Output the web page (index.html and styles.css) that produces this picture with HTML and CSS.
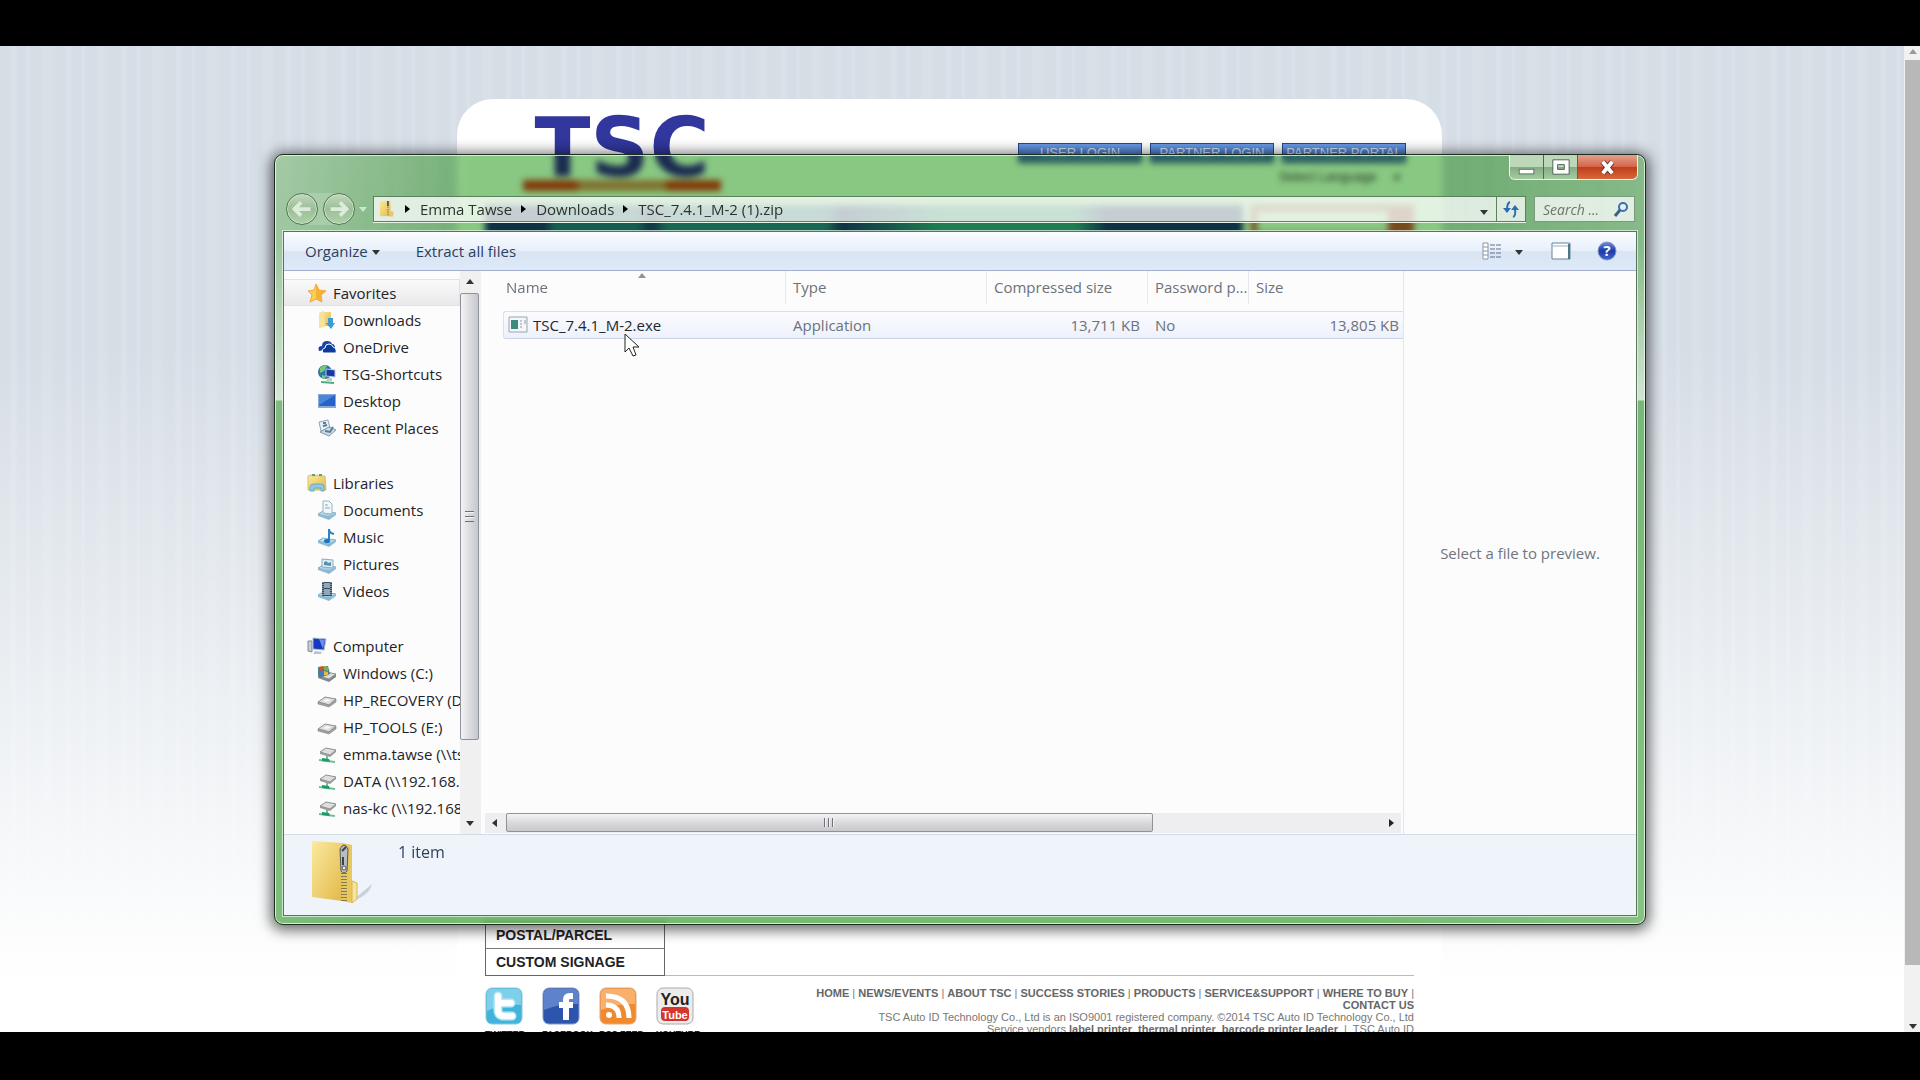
FILE: index.html
```html
<!DOCTYPE html>
<html lang="en">
<head>
    <meta charset="UTF-8">
    <meta name="viewport" content="width=device-width, initial-scale=1.0">
    <title>TSC_7.4.1_M-2 (1).zip</title>
    <link rel="stylesheet" href="styles.css">
</head>
<body>

    <!-- Shared icons -->
    <svg class="defs" aria-hidden="true">
        <defs>
            <linearGradient id="gold" x1="0" y1="0" x2="1" y2="1">
                <stop offset="0" stop-color="#fbeaa0"/><stop offset="1" stop-color="#e3b94a"/>
            </linearGradient>
            <linearGradient id="tray" x1="0" y1="0" x2="0" y2="1">
                <stop offset="0" stop-color="#d9f0fa"/><stop offset="1" stop-color="#7fb2cf"/>
            </linearGradient>
            <linearGradient id="orb" x1="0" y1="0" x2="0" y2="1">
                <stop offset="0" stop-color="#6f8fe0"/><stop offset=".5" stop-color="#1b3aa8"/><stop offset="1" stop-color="#3f68d0"/>
            </linearGradient>
        </defs>
        <symbol id="disk" viewBox="0 0 20 20">
            <path d="M1 12 8 7l11 2-7 6z" fill="#dcdcdc" stroke="#8f8f8f"/>
            <path d="M1 12v2l11 3 7-5V9l-7 6z" fill="#a3a3a3" stroke="#858585" stroke-width=".6"/>
            <path d="M6 11l4-2 4 1-4 2z" fill="#f8f8f8"/>
        </symbol>
        <symbol id="netdisk" viewBox="0 0 20 20">
            <path d="M3 8l6-4 10 2-6 5z" fill="#dedede" stroke="#8f8f8f"/>
            <path d="M3 8v2l10 3 6-5V6l-6 5z" fill="#9a9a9a"/>
            <path d="M10 12v4M2 16l16 2" stroke="#6fbf9b" stroke-width="2"/>
            <path d="M5 14l7 1 1 3-8-1z" fill="#1f9a68"/>
        </symbol>
        <symbol id="base" viewBox="0 0 20 20">
            <path d="M1 14 6 11l13 2-7 5z" fill="url(#tray)" stroke="#6a9cba" stroke-width=".8"/>
            <path d="M1 14v2l11 4 7-5v-2l-7 5z" fill="#8fbdd6"/>
        </symbol>
        <symbol id="zip" viewBox="0 0 20 20">
            <path d="M2 1h12v17H2z" fill="url(#gold)"/>
            <path d="M14 12l3 1v5l-3 1z" fill="#e8c662"/>
            <path d="M11 1v6" stroke="#555" stroke-width="2"/>
            <path d="M11 8v10" stroke="#9b9170" stroke-width="2" stroke-dasharray="1 1"/>
        </symbol>
    </svg>

    <div class="stage">

        <!-- Web site in the back -->
        <div class="site">
            <div class="paper">
                <header class="site-header">
                    <div class="logo"><span>TSC</span><i class="logo-bar"></i></div>
                    <div class="logins">
                        <div class="login-row">
                            <a href="#">USER LOGIN</a>
                            <a href="#">PARTNER LOGIN</a>
                            <a href="#">PARTNER PORTAL</a>
                        </div>
                        <p class="language">Select Language <span>▼</span></p>
                    </div>
                </header>
                <div class="site-nav"><div class="site-menu"></div><div class="site-search"></div></div>
                <div class="site-main"></div>
                <div class="site-bottom">
                    <ul class="markets">
                        <li><a href="#">POSTAL/PARCEL</a></li>
                        <li><a href="#">CUSTOM SIGNAGE</a></li>
                    </ul>
                    <hr>
                </div>
                <footer class="site-footer">
                    <div class="social">
                        <a href="#">
                            <svg viewBox="0 0 38 38"><rect x="1" y="1" width="36" height="36" rx="6" fill="#42b4dc" stroke="#8cc8dc"/><path d="M2 7q0-5 5-5h24q5 0 5 5v11Q18 16 2 24z" fill="#7ed0ea"/><path d="M13 9v14q0 6 6 6h8M13 16h13" fill="none" stroke="#b5e8f8" stroke-width="9" stroke-linecap="round"/><path d="M13 9v14q0 6 6 6h8M13 16h13" fill="none" stroke="#fff" stroke-width="6" stroke-linecap="round"/></svg>
                            <span>TWITTER</span>
                        </a>
                        <a href="#">
                            <svg viewBox="0 0 38 38"><rect x="1" y="1" width="36" height="36" rx="6" fill="#2d55ad" stroke="#8499c8"/><path d="M2 7q0-5 5-5h24q5 0 5 5v10Q18 16 2 23z" fill="#5f83cb"/><path d="M31 9h-3q-4 0-4 4v20M17 18h14" fill="none" stroke="#fff" stroke-width="6"/></svg>
                            <span>FACEBOOK</span>
                        </a>
                        <a href="#">
                            <svg viewBox="0 0 38 38"><rect x="1" y="1" width="36" height="36" rx="6" fill="#f08a2c" stroke="#e0a878"/><path d="M2 7q0-5 5-5h24q5 0 5 5v10Q18 16 2 23z" fill="#f8b06c"/><circle cx="10" cy="28" r="3" fill="#fff"/><path d="M7 18q13 0 13 13M7 9q23 0 23 22" fill="none" stroke="#fff" stroke-width="5"/></svg>
                            <span>RSS FEED</span>
                        </a>
                        <a href="#">
                            <svg viewBox="0 0 38 38"><rect x="1" y="1" width="36" height="36" rx="6" fill="#ececec" stroke="#aaa"/><text class="yt-you" x="19" y="18" text-anchor="middle">You</text><rect x="5" y="20" width="28" height="14" rx="4" fill="#d2362f"/><text class="yt-tube" x="19" y="32" text-anchor="middle">Tube</text></svg>
                            <span>YOUTUBE</span>
                        </a>
                    </div>
                    <div class="legal">
                        <p><a href="#">HOME</a> | <a href="#">NEWS/EVENTS</a> | <a href="#">ABOUT TSC</a> | <a href="#">SUCCESS STORIES</a> | <a href="#">PRODUCTS</a> | <a href="#">SERVICE&amp;SUPPORT</a> | <a href="#">WHERE TO BUY</a> |<br><a href="#">CONTACT US</a></p>
                        <p>TSC Auto ID Technology Co., Ltd is an ISO9001 registered company. ©2014 TSC Auto ID Technology Co., Ltd</p>
                        <p>Service vendors <b>label printer</b>, <b>thermal printer</b>, <b>barcode printer leader</b> &nbsp;|&nbsp; TSC Auto ID</p>
                    </div>
                </footer>
            </div>
        </div>
        <div class="page-scroll"><span class="arrow up"></span><div class="page-thumb"></div><span class="arrow down"></span></div>

        <!-- Aero glass -->
        <div class="glass-blur"></div>
        <div class="glass-tint"></div>

        <!-- Explorer window -->
        <div class="window">
            <div class="caption">
                <button class="cap" aria-label="Minimize"><svg viewBox="0 0 36 25"><rect x="10" y="15" width="16" height="5" fill="#fff" stroke="#5b6f60"/></svg></button>
                <button class="cap" aria-label="Maximize"><svg viewBox="0 0 34 25"><path d="M9 5h17v15H9zM14 10v5h7v-5z" fill="#fff" fill-rule="evenodd" stroke="#4e6152"/></svg></button>
                <button class="cap close" aria-label="Close"><svg viewBox="0 0 60 25"><path d="M25 7l10 12M35 7 25 19" stroke="#6b3026" stroke-width="6"/><path d="M25 7l10 12M35 7 25 19" stroke="#fff" stroke-width="4"/></svg></button>
            </div>

            <div class="address-row">
                <div class="history">
                    <button aria-label="Back"><svg viewBox="0 0 32 32"><path d="M25 16H9M15 9l-7 7 7 7" fill="none" stroke="#dcecd8" stroke-width="4"/></svg></button>
                    <button aria-label="Forward"><svg viewBox="0 0 32 32"><path d="M7 16h16M17 9l7 7-7 7" fill="none" stroke="#dcecd8" stroke-width="4"/></svg></button>
                </div>
                <span class="history-drop"></span>
                <nav class="address">
                    <svg class="icon" viewBox="0 0 20 20"><use href="#zip"/></svg>
                    <i class="tri"></i><a href="#">Emma Tawse</a>
                    <i class="tri"></i><a href="#">Downloads</a>
                    <i class="tri"></i><a href="#">TSC_7.4.1_M-2 (1).zip</a>
                    <button class="address-drop" aria-label="Previous locations"><i class="caret"></i></button>
                    <button class="refresh" aria-label="Refresh"><svg viewBox="0 0 18 18"><path d="M8 2Q5 3 5 10" fill="none" stroke="#2d6cb5" stroke-width="2"/><path d="M1 8h8l-4 5z" fill="#2d6cb5"/><path d="M11 17q3-1 2-8" fill="none" stroke="#2d6cb5" stroke-width="2"/><path d="M9 10h8l-4-5z" fill="#2d6cb5"/></svg></button>
                </nav>
                <label class="search">
                    <input type="text" placeholder="Search ..." aria-label="Search">
                    <svg viewBox="0 0 16 16"><circle cx="10" cy="6" r="4" fill="#e6f0fa" stroke="#3b6fae" stroke-width="2"/><path d="M7 9l-5 6" stroke="#3f5f86" stroke-width="3"/></svg>
                </label>
            </div>

            <div class="client">
                <div class="toolbar">
                    <button>Organize <i class="caret"></i></button>
                    <button>Extract all files</button>
                    <div class="tools">
                        <button aria-label="Change view"><svg width="20" height="18" viewBox="0 0 20 18"><path d="M1 1h5v16H1zM1 5h5M1 9h5M1 13h5" fill="#fff" stroke="#8a98a6"/><path d="M8 3h11M8 7h11M8 11h11M8 15h11" stroke="#5d7186" stroke-dasharray="5 1"/></svg></button>
                        <button class="view-drop" aria-label="More options"><i class="caret"></i></button>
                        <button aria-label="Preview pane"><svg width="20" height="18" viewBox="0 0 20 18"><path d="M1 1h18v16H1z" fill="#fff" stroke="#6b8299"/><path d="M1 4h18" stroke="#9cb0c2"/><path d="M18 2v15" stroke="#4d7880" stroke-width="2"/></svg></button>
                        <button aria-label="Help"><svg width="20" height="20" viewBox="0 0 20 20"><circle cx="10" cy="10" r="9" fill="url(#orb)" stroke="#8496c4"/><text class="help-mark" x="10" y="15" text-anchor="middle">?</text></svg></button>
                    </div>
                </div>

                <div class="panes">
                    <nav class="tree">
                        <ul>
                            <li class="root current"><a href="#"><svg viewBox="0 0 20 20"><path d="M9 1l3 6 7 1-5 4 1 7-6-3-6 3 2-7-4-4 6-1z" fill="#f9cf4c" stroke="#eba942"/><path d="M9 1l3 6 7 1-5 4 1 7-6-3z" fill="#f4b037"/></svg>Favorites</a></li>
                            <li><a href="#"><svg viewBox="0 0 20 20"><path d="M2 3l5-2v15l-5 2zM7 2h7v14H7z" fill="url(#gold)"/><path d="M2 3l5-2 1 16-6 1z" fill="#f7e49c"/><path d="M11 8h5v5h2l-4 6-5-6h2z" fill="#3a9bd8"/></svg>Downloads</a></li>
                            <li><a href="#"><svg viewBox="0 0 20 20"><path d="M2 14q-2-5 3-5 0-5 5-5 4 0 5 3 3 0 3 4z" fill="#1947a8"/><path d="M6 16q-2-4 2-5 0-4 4-4 3 0 4 3 4 1 3 6z" fill="#0b3c9b" stroke="#fff"/></svg>OneDrive</a></li>
                            <li><a href="#"><svg viewBox="0 0 20 20"><circle cx="8" cy="8" r="7" fill="#2c77a9"/><path d="M3 4q4-4 7-2L7 7 3 9zM5 11l4 1-1 3-3-1z" fill="#79c67c"/><path d="M9 5l9 1v7l-9-1z" fill="#1637a8" stroke="#b9c8e0"/><path d="M11 14h4v3H9z" fill="#c1cbd0"/><path d="M4 18l13 1" stroke="#48b37d" stroke-width="2"/></svg>TSG-Shortcuts</a></li>
                            <li><a href="#"><svg viewBox="0 0 20 20"><path d="M1 3h18v14H1z" fill="#86a9d8"/><path d="M2 4h16v11H2z" fill="#2763c7"/><path d="M2 4h16L2 14z" fill="#4c86dc"/></svg>Desktop</a></li>
                            <li><a href="#"><svg viewBox="0 0 20 20"><path d="M2 4l9-2 2 8-9 3z" fill="#e7eef3" stroke="#90a6b4"/><path d="M3 14l9-5 7 3-7 6z" fill="#d1dde4" stroke="#8198a6"/><path d="M6 5h3M6 8l4-1M8 13l5 1 3-5" stroke="#4d81a0" stroke-width="2" fill="none"/></svg>Recent Places</a></li>
                        </ul>
                        <ul>
                            <li class="root"><a href="#"><svg viewBox="0 0 20 20"><path d="M1 3l3-1 3 1 3-1 3 1h5l1 14H1z" fill="url(#gold)" stroke="#d9bd68"/><path d="M5 2h3M12 2h3" stroke="#5ea276" stroke-width="2"/><path d="M3 18v-4q0-3 4-3h7q3 0 3 3v4h-3v-3H7v3z" fill="#8ccbe6" stroke="#6aa9c6"/></svg>Libraries</a></li>
                            <li><a href="#"><svg viewBox="0 0 20 20"><use href="#base"/><path d="M6 1h6l3 3v10l-9-1z" fill="#f2f7fa" stroke="#9ab3c4"/><path d="M8 5h3M8 8h5" stroke="#7faac6"/></svg>Documents</a></li>
                            <li><a href="#"><svg viewBox="0 0 20 20"><use href="#base"/><path d="M12 14V2q0 4 5 5" fill="none" stroke="#2a83c9" stroke-width="2"/><ellipse cx="10" cy="14" rx="3" ry="2" fill="#1a73bf"/></svg>Music</a></li>
                            <li><a href="#"><svg viewBox="0 0 20 20"><use href="#base"/><path d="M5 5l11 1v8L5 13z" fill="#ddeef5" stroke="#8fabb9"/><path d="M7 8q3-2 4 1l3-1v4l-7-1z" fill="#5590b0"/></svg>Pictures</a></li>
                            <li><a href="#"><svg viewBox="0 0 20 20"><use href="#base"/><path d="M5 1h10v14H5z" fill="#3d4b58"/><path d="M7 2h6v5H7zM7 8h6v6H7z" fill="#8ba9bf"/><path d="M6 1v14M14 1v14" stroke="#c8d0d6" stroke-dasharray="1 1"/></svg>Videos</a></li>
                        </ul>
                        <ul>
                            <li class="root"><a href="#"><svg viewBox="0 0 20 20"><path d="M1 5h4v11l-4-1z" fill="#c4cdd6" stroke="#7e8b98"/><path d="M6 2l13 1-2 11-11-1z" fill="#1638c0" stroke="#a8b9d8"/><path d="M12 3l6 1-2 9z" fill="#6c8ce8"/><path d="M8 15l7 1-1 2H6z" fill="#b7c3ce"/></svg>Computer</a></li>
                            <li><a href="#"><svg viewBox="0 0 20 20"><path d="M1 13 9 9l10 2-7 5z" fill="#dcdcdc" stroke="#8f8f8f"/><path d="M1 13v2l11 4 7-5v-3l-7 5z" fill="#7f8a8c"/><path d="M1 4l10-1 2 8-10 4-2-3z" fill="#4d7d86"/><path d="M2 4l4-1v4l-4 1z" fill="#d8502e"/><path d="M7 3l4 1v4L7 7z" fill="#76b843"/><path d="M2 9l4-1v4l-4 1z" fill="#3c7cc4"/><path d="M7 8l4 1v4l-4-1z" fill="#e8b93a"/></svg>Windows (C:)</a></li>
                            <li><a href="#"><svg><use href="#disk"/></svg>HP_RECOVERY (D:)</a></li>
                            <li><a href="#"><svg><use href="#disk"/></svg>HP_TOOLS (E:)</a></li>
                            <li><a href="#"><svg><use href="#netdisk"/></svg>emma.tawse (\\tsg</a></li>
                            <li><a href="#"><svg><use href="#netdisk"/></svg>DATA (\\192.168.1</a></li>
                            <li><a href="#"><svg><use href="#netdisk"/></svg>nas-kc (\\192.168.1</a></li>
                        </ul>
                    </nav>
                    <div class="v-scroll"><span class="arrow up"></span><div class="v-thumb"><i></i></div><span class="arrow down"></span></div>

                    <div class="list">
                        <table>
                            <thead>
                                <tr><th class="col-name">Name<i class="sort"></i></th><th class="col-type">Type</th><th class="col-comp">Compressed size</th><th class="col-pass">Password p...</th><th class="col-size">Size</th></tr>
                            </thead>
                            <tbody>
                                <tr>
                                    <td class="file"><svg viewBox="0 0 20 18"><path d="M1 1h18v15H1z" fill="#f4f6f7" stroke="#9aa5ad"/><path d="M3 4h7v9H3z" fill="#3b8c7c"/><path d="M12 5h2M12 8h2M12 11h2M17 4v4" stroke="#8b9aa4"/></svg>TSC_7.4.1_M-2.exe</td>
                                    <td>Application</td><td class="num">13,711 KB</td><td>No</td><td class="num">13,805 KB</td>
                                </tr>
                            </tbody>
                        </table>
                        <div class="h-scroll"><span class="arrow left"></span><div class="h-track"><div class="h-thumb"><i></i></div></div><span class="arrow right"></span></div>
                    </div>

                    <aside class="preview">Select a file to preview.</aside>
                </div>

                <div class="details">
                    <svg viewBox="0 0 64 66">
                        <path d="M42 62l20-17q-3 12-20 17z" fill="#b9c2cf" opacity=".7"/>
                        <path d="M2 2l30 2v58L2 58z" fill="url(#gold)"/>
                        <path d="M32 4l10 2v58l-10-2z" fill="#e8c75d"/>
                        <path d="M42 42l5 2v16l-5 4z" fill="#f4e5a4" stroke="#d9b552"/>
                        <path d="M34 34v29" stroke="#817a5d" stroke-width="6" stroke-dasharray="1 2"/>
                        <path d="M30 10q4-8 8 0l-1 22q-3 4-6 0z" fill="#b9bdc2" stroke="#54585d"/>
                        <path d="M32 12l4-4M33 18v8" stroke="#3f4347" stroke-width="2"/>
                        <circle cx="34" cy="29" r="2" fill="#eee" stroke="#555"/>
                    </svg>
                    <span>1 item</span>
                </div>
            </div>
        </div>

        <svg class="cursor" viewBox="0 0 16 24"><path d="M1 1v18l4-4 4 8 3-1-3-8h6z" fill="#fff" stroke="#222"/></svg>
    </div>

</body>
</html>
```
FILE: styles.css
```css
* {
    box-sizing: border-box;
}

body {
    margin: 0;
    padding: 46px 0 48px;
    height: 100vh;
    background: #000;
    font-family: "Open Sans", "Noto Sans", sans-serif;
    font-size: 15px;
    color: #1e2328;
}

a {
    color: inherit;
    text-decoration: none;
}

ul {
    list-style: none;
    margin: 0;
    padding: 0;
}

p {
    margin: 0;
}

button {
    border: 0;
    padding: 0;
    background: none;
    font: inherit;
    color: inherit;
}

.defs {
    position: absolute;
    width: 0;
    height: 0;
}

.stage {
    position: relative;
    display: flex;
    height: 100%;
    overflow: hidden;
}

/* Site */
.site {
    flex: 1;
    display: flex;
    justify-content: center;
    padding: 53px 5px 0 0;
    font-family: "Liberation Sans", Arial, sans-serif;
    background:
        linear-gradient(rgba(255, 255, 255, 0) 30%, #fff 95%),
        repeating-linear-gradient(90deg, #d5dde5 0 9px, #dae1e8 12px 15px, #d6dde6 18px 26px, #dce2ea 28px, #d5dde5 31px 40px, #d9e0e8 44px 50px, #d5dde5 55px);
}

.paper {
    display: flex;
    flex-direction: column;
    width: 985px;
    padding: 0 28px;
    background: #fff;
    border-radius: 36px 36px 0 0;
}

.site-header {
    display: flex;
    justify-content: space-between;
    height: 106px;
    padding: 20px 8px 0 38px;
}

.logo {
    width: 198px;
    text-align: center;
    color: #31379c;
    font: bold 82px/58px "DejaVu Sans", sans-serif;
}

.logo span {
    display: block;
}

.logo-bar {
    display: block;
    height: 11px;
    margin-top: 3px;
    background: linear-gradient(90deg, #f04a10 28%, #f0905a 28% 72%, #f04a10 72%);
}

.logins {
    padding-top: 24px;
}

.login-row {
    display: flex;
    gap: 8px;
}

.login-row a {
    width: 124px;
    height: 20px;
    border: 1px solid #28488c;
    background: linear-gradient(#6a9ce8, #3a68b8);
    color: #d8e6fa;
    font-size: 13px;
    line-height: 18px;
    text-align: center;
    white-space: nowrap;
}

.language {
    margin-top: 6px;
    padding-right: 4px;
    text-align: right;
    font-size: 13px;
    color: #444;
}

.language span {
    margin-left: 12px;
    font-size: 10px;
}

.site-nav {
    display: flex;
    gap: 8px;
    height: 34px;
}

.site-menu {
    flex: 1;
    background: linear-gradient(90deg, #1c3f86 8%, #2878a0 9% 20%, #1c3f86 22%, #2f84a4 24% 45%, #1c3f86 47%, #38a0a0 60% 78%, #1c3f86 82%);
}

.site-search {
    width: 163px;
    border: 6px solid #e0603c;
    border-right-width: 26px;
    background: #fff;
}

.site-main {
    flex: 1;
}

.site-bottom {
    display: flex;
    align-items: flex-end;
}

.site-bottom hr {
    flex: 1;
    margin: 0;
    border: 0;
    border-top: 1px solid #bbb;
}

.markets {
    width: 180px;
    border: 1px solid #666;
    font: bold 14px/26px "Liberation Sans", Arial, sans-serif;
    color: #222;
}

.markets li {
    padding-left: 10px;
}

.markets li + li {
    border-top: 1px solid #777;
}

.site-footer {
    display: flex;
    justify-content: space-between;
    height: 68px;
    margin-bottom: -12px;
    padding-top: 11px;
    font-size: 11px;
    line-height: 12px;
}

.social {
    display: flex;
    gap: 19px;
}

.social a {
    width: 38px;
    font-size: 9px;
    font-weight: bold;
    white-space: nowrap;
    color: #222;
}

.social svg {
    display: block;
    width: 38px;
    height: 38px;
    margin-bottom: 3px;
}

.yt-you {
    font: bold 16px "Liberation Sans", Arial, sans-serif;
    fill: #222;
}

.yt-tube {
    font: bold 11px "Liberation Sans", Arial, sans-serif;
    fill: #fff;
}

.legal {
    text-align: right;
    white-space: nowrap;
    color: #777;
}

.legal a,
.legal b {
    font-weight: bold;
    color: #666;
}

/* Arrows and carets */
.arrow,
.tri,
.caret,
.sort,
.history-drop {
    width: 0;
    height: 0;
    border: 4px solid transparent;
}

.arrow.up,
.sort {
    border-top: 0;
    border-bottom: 5px solid #333;
}

.arrow.down,
.caret,
.history-drop {
    border-bottom: 0;
    border-top: 5px solid #333;
}

.arrow.left {
    border-left: 0;
    border-right: 5px solid #333;
}

.arrow.right,
.tri {
    border-right: 0;
    border-left: 5px solid #222;
}

.caret {
    display: inline-block;
}

.page-scroll {
    display: flex;
    flex-direction: column;
    align-items: center;
    justify-content: space-between;
    width: 16px;
    padding: 3px 0 3px 1px;
    background: #f1f1f1;
}

.page-scroll .arrow.up {
    border-bottom-color: #999;
}

.page-thumb {
    width: 15px;
    flex: 1;
    margin: 6px 0 59px;
    background: #b8b8b8;
}

/* Window */
.glass-blur,
.glass-tint,
.window {
    position: absolute;
    inset: 108px 274px 107px;
    border-radius: 9px;
}

.glass-blur {
    backdrop-filter: blur(3px);
}

.glass-tint {
    background: #88c882;
    mix-blend-mode: multiply;
}

.window {
    display: flex;
    flex-direction: column;
    padding: 0 8px 8px;
    border: 1px solid #1d2c22;
    box-shadow: 0 2px 14px 3px rgba(0, 0, 0, .6), inset 0 0 0 1px rgba(240, 255, 240, .75);
    background:
        linear-gradient(rgba(255, 255, 255, 0) 90px, rgba(255, 255, 255, .6) 245px, rgba(90, 170, 90, .4) 246px),
        linear-gradient(100deg, rgba(255, 255, 255, .35), rgba(255, 255, 255, 0) 14% 80%, rgba(255, 255, 255, .25));
}

.caption {
    display: flex;
    align-self: flex-end;
    height: 25px;
    margin-right: -1px;
    border: 1px solid #f0f8ee;
    border-top: 0;
    border-radius: 0 0 6px 6px;
    overflow: hidden;
}

.cap {
    width: 34px;
    border-right: 1px solid #4e6b52;
    background: linear-gradient(#bcd8b8 48%, #84aa84 50%, #a4cca0);
}

.cap svg {
    display: block;
    width: 100%;
    height: 24px;
}

.cap.close {
    width: 59px;
    border: 0;
    background: linear-gradient(#e4a08c, #d4664a 48%, #c03c18 50%, #d8683c);
}

.address-row {
    display: flex;
    align-items: center;
    height: 51px;
    padding: 7px 2px 0 3px;
}

.history {
    display: flex;
    gap: 5px;
    border-radius: 16px;
    background: rgba(190, 215, 185, .5);
}

.history button {
    width: 32px;
    height: 32px;
    border: 1px solid #4f7353;
    border-radius: 50%;
    background: linear-gradient(#c0d8bc, #9cbe98 50%, #b0d2aa);
    box-shadow: inset 0 0 0 1px #d2e8ce;
}

.history svg {
    display: block;
}

.history-drop {
    margin: 0 6px 0 4px;
    border-top-color: #cfe6ca;
}

.address {
    flex: 1;
    display: flex;
    align-items: center;
    height: 26px;
    padding-left: 4px;
    border: 1px solid #5d8061;
    background: rgba(255, 255, 255, .76);
    box-shadow: 0 1px 0 #e8f4e6;
    color: #2b332c;
}

.icon {
    width: 18px;
    height: 18px;
}

.tri {
    margin: 0 10px 0 9px;
    border-left-color: #000;
}

.address-drop {
    width: 24px;
    margin-left: auto;
}

.refresh {
    width: 29px;
    height: 24px;
    border-left: 1px solid #5d8061;
}

.refresh svg {
    display: block;
    width: 18px;
    height: 18px;
    margin: auto;
}

.search {
    display: flex;
    align-items: center;
    width: 101px;
    height: 26px;
    margin-left: 8px;
    padding: 0 5px 0 8px;
    border: 1px solid #7a9c7c;
    background: rgba(255, 255, 255, .76);
}

.search input {
    flex: 1;
    min-width: 0;
    padding: 0;
    border: 0;
    background: none;
    font: italic 14px "Open Sans", sans-serif;
}

.search input::placeholder {
    color: #6c756d;
}

.search svg {
    width: 16px;
    height: 16px;
}

.client {
    flex: 1;
    display: flex;
    flex-direction: column;
    min-height: 0;
    border: 1px solid #58755c;
    outline: 1px solid rgba(235, 250, 235, .7);
    background: #fcfcfd;
}

.toolbar {
    display: flex;
    align-items: center;
    gap: 36px;
    height: 39px;
    padding: 0 19px 0 21px;
    border-bottom: 1px solid #a2aeca;
    background: linear-gradient(#fafcff, #e8f0fb 48%, #dae5f3 52%, #dde9f9);
    color: #2c3f5e;
}

.toolbar .caret {
    margin-bottom: 2px;
}

.tools {
    display: flex;
    align-items: center;
    margin-left: auto;
}

.tools svg {
    display: block;
}

.view-drop {
    margin: 0 28px 0 13px;
}

.tools button:last-child {
    margin-left: 26px;
}

.help-mark {
    font: bold 15px "Open Sans", sans-serif;
    fill: #fff;
}

.panes {
    flex: 1;
    display: flex;
    min-height: 0;
}

.tree {
    width: 176px;
    padding-top: 8px;
    overflow: hidden;
}

.tree ul + ul {
    margin-top: 28px;
}

.tree li {
    height: 27px;
    padding-left: 33px;
}

.tree li.root {
    padding-left: 23px;
}

.tree li.current {
    border: 1px solid #e2e2e4;
    border-left: 0;
    background: linear-gradient(#fafafa, #e9e9eb);
}

.tree a {
    display: flex;
    align-items: center;
    gap: 6px;
    height: 100%;
    white-space: nowrap;
}

.tree svg {
    flex: none;
    width: 20px;
    height: 20px;
}

.v-scroll {
    display: flex;
    flex-direction: column;
    align-items: center;
    width: 21px;
    padding: 8px 2px 8px 0;
    background: #f0f0f1;
}

.v-thumb {
    flex: 1;
    display: flex;
    align-items: center;
    justify-content: center;
    width: 19px;
    margin: 9px 0 81px;
    border: 1px solid #8f9299;
    border-radius: 2px;
    background: linear-gradient(90deg, #f4f4f5, #dcdce0 50%, #c6c8cf);
}

.v-thumb i {
    width: 9px;
    height: 11px;
    background: repeating-linear-gradient(#6d7078 0 1px, #f4f4f4 1px 2px, transparent 2px 5px);
}

.list {
    flex: 1;
    display: flex;
    flex-direction: column;
    justify-content: space-between;
    padding: 0 2px 1px 4px;
    border-right: 1px solid #e2e5ec;
}

table {
    width: calc(100% - 16px);
    margin-left: 18px;
    table-layout: fixed;
    border-collapse: separate;
    border-spacing: 0;
    color: #6c727a;
}

th {
    height: 33px;
    padding: 0 0 2px 7px;
    border-right: 1px solid #e6e8ee;
    text-align: left;
    font-weight: normal;
    white-space: nowrap;
}

.col-name {
    position: relative;
    width: 283px;
    padding-left: 3px;
}

.sort {
    position: absolute;
    top: 2px;
    left: 48%;
    border-bottom-color: #8d949c;
}

.col-type {
    width: 201px;
}

.col-comp {
    width: 161px;
}

.col-pass {
    width: 101px;
}

.col-size {
    border-right: 0;
}

tbody::before {
    content: "";
    display: block;
    height: 7px;
}

td {
    height: 28px;
    padding: 0 4px 0 7px;
    border-top: 1px solid #dcdfe6;
    border-bottom: 1px solid #ccd5e8;
    background: linear-gradient(#fbfcfe, #edf1fc);
}

.file {
    display: flex;
    align-items: center;
    gap: 5px;
    padding-left: 4px;
    border-left: 1px solid #dcdfe6;
    border-radius: 3px 0 0 3px;
    color: #23272c;
}

.file svg {
    width: 20px;
    height: 18px;
}

td.num {
    padding-right: 8px;
    text-align: right;
}

td.num:last-child {
    padding-right: 4px;
}

.h-scroll {
    display: flex;
    align-items: center;
    gap: 9px;
    height: 20px;
    padding: 0 7px;
    background: #eeeef0;
}

.h-track {
    flex: 1;
    height: 100%;
}

.h-thumb {
    display: flex;
    align-items: center;
    justify-content: center;
    width: 74%;
    height: 19px;
    border: 1px solid #8f9299;
    border-radius: 2px;
    background: linear-gradient(#f5f5f6, #dadadc 50%, #c9c9ce);
}

.h-thumb i {
    width: 11px;
    height: 9px;
    background: repeating-linear-gradient(90deg, #6d7078 0 1px, #f4f4f4 1px 2px, transparent 2px 4px);
}

.preview {
    display: flex;
    align-items: center;
    justify-content: center;
    width: 232px;
    color: #70757c;
}

.details {
    display: flex;
    gap: 24px;
    height: 81px;
    padding: 4px 26px;
    border-top: 1px solid #d3dbe6;
    background: #eff3fa;
    color: #2f4263;
    font-size: 16px;
    line-height: 26px;
}

.details svg {
    width: 64px;
    height: 66px;
}

.cursor {
    position: absolute;
    top: 287px;
    left: 624px;
    width: 16px;
    height: 24px;
}
```
